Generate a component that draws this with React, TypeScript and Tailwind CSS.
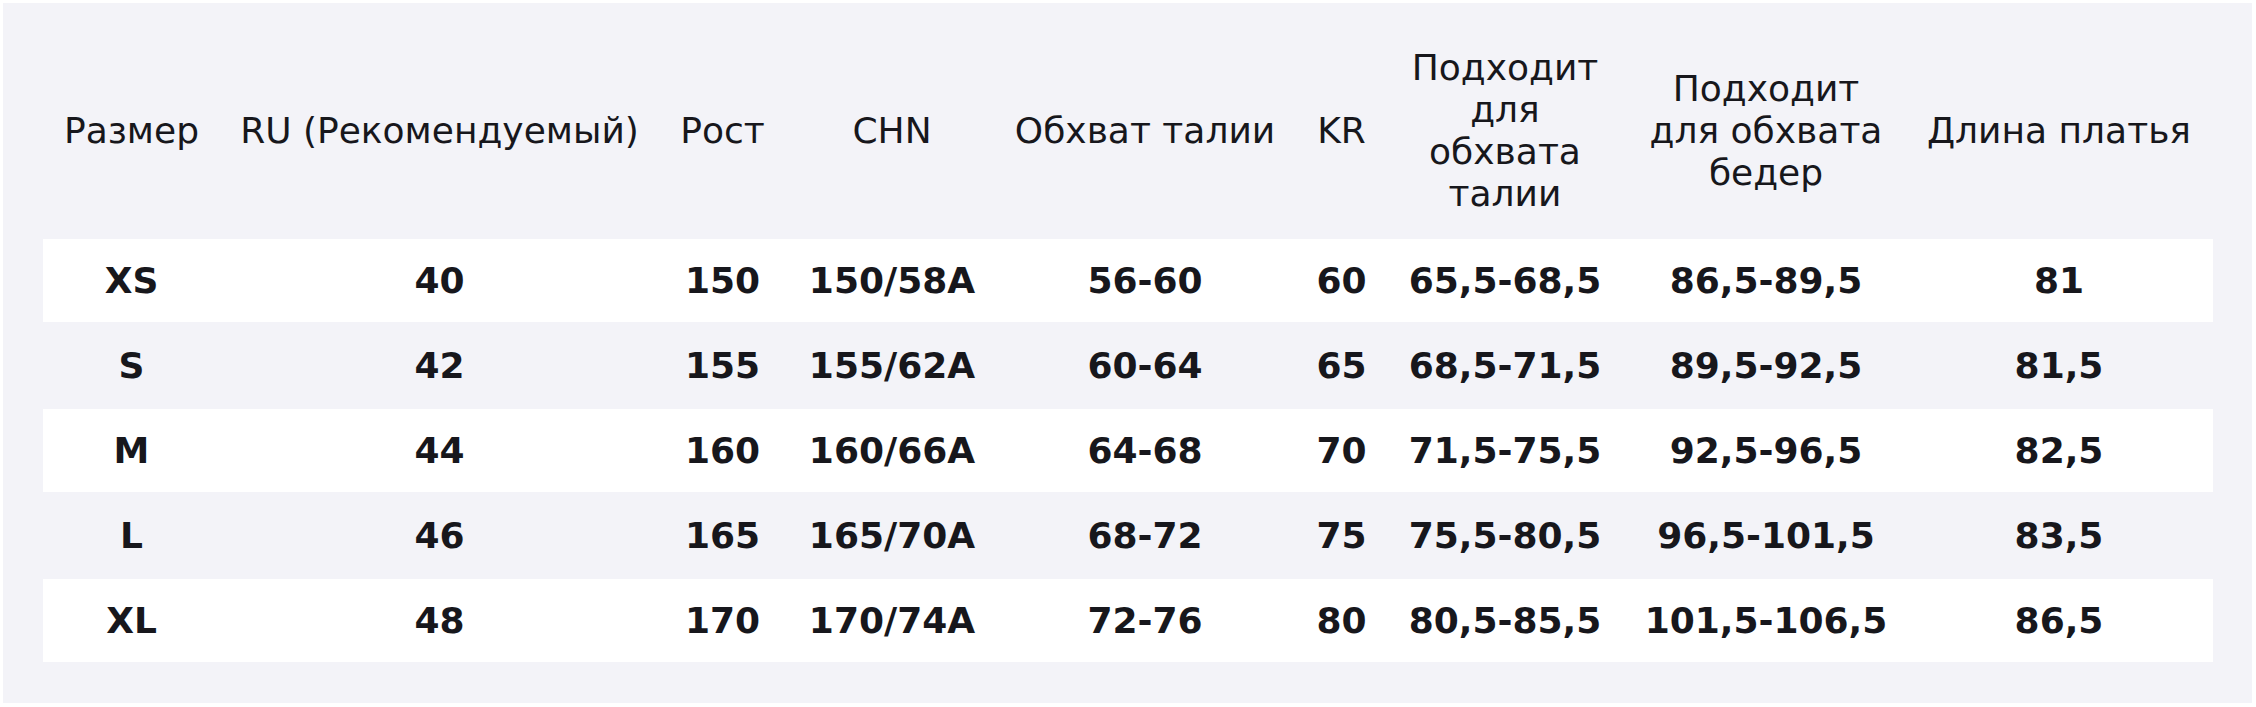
import React from "react";

const widths = [177, 439, 127, 212, 294, 99, 228, 294, 300];

const rows: string[][] = [
  ["XS", "40", "150", "150/58A", "56-60", "60", "65,5-68,5", "86,5-89,5", "81"],
  ["S", "42", "155", "155/62A", "60-64", "65", "68,5-71,5", "89,5-92,5", "81,5"],
  ["M", "44", "160", "160/66A", "64-68", "70", "71,5-75,5", "92,5-96,5", "82,5"],
  ["L", "46", "165", "165/70A", "68-72", "75", "75,5-80,5", "96,5-101,5", "83,5"],
  ["XL", "48", "170", "170/74A", "72-76", "80", "80,5-85,5", "101,5-106,5", "86,5"],
];

export default function App() {
  return (
    <div className="w-[2256px] h-[707px] bg-white pt-[3px] pl-[3px]">
      <div
        className="w-[2249px] h-[700px] bg-[#f3f3f8] pt-[20px] px-[40px] text-[#17171c]"
        style={{ fontFamily: '"DejaVu Sans", sans-serif' }}
      >
        <table className="table-fixed border-collapse w-[2170px] text-[36px] leading-[42px]">
          <colgroup>
            {widths.map((w, i) => (
              <col key={i} style={{ width: w }} />
            ))}
          </colgroup>
          <thead>
            <tr className="h-[216px]">
              <th className="p-0 font-normal text-center align-middle whitespace-nowrap">Размер</th>
              <th className="p-0 font-normal text-center align-middle whitespace-nowrap">RU (Рекомендуемый)</th>
              <th className="p-0 font-normal text-center align-middle whitespace-nowrap">Рост</th>
              <th className="p-0 font-normal text-center align-middle whitespace-nowrap">CHN</th>
              <th className="p-0 font-normal text-center align-middle whitespace-nowrap">Обхват талии</th>
              <th className="p-0 font-normal text-center align-middle whitespace-nowrap">KR</th>
              <th className="p-0 font-normal text-center align-middle whitespace-nowrap">
                Подходит
                <br />
                для
                <br />
                обхвата
                <br />
                талии
              </th>
              <th className="p-0 font-normal text-center align-middle whitespace-nowrap">
                Подходит
                <br />
                для обхвата
                <br />
                бедер
              </th>
              <th className="p-0 pr-[8px] font-normal text-center align-middle whitespace-nowrap">Длина платья</th>
            </tr>
          </thead>
          <tbody>
            {rows.map((r, i) => (
              <tr
                key={i}
                className={i % 2 === 0 ? "bg-white h-[83px]" : "bg-transparent h-[87px]"}
              >
                {r.map((c, j) => (
                  <td
                    key={j}
                    className={
                      j === 8
                        ? "p-0 pr-[8px] font-bold text-center align-middle whitespace-nowrap"
                        : "p-0 font-bold text-center align-middle whitespace-nowrap"
                    }
                  >
                    {c}
                  </td>
                ))}
              </tr>
            ))}
          </tbody>
        </table>
      </div>
    </div>
  );
}
